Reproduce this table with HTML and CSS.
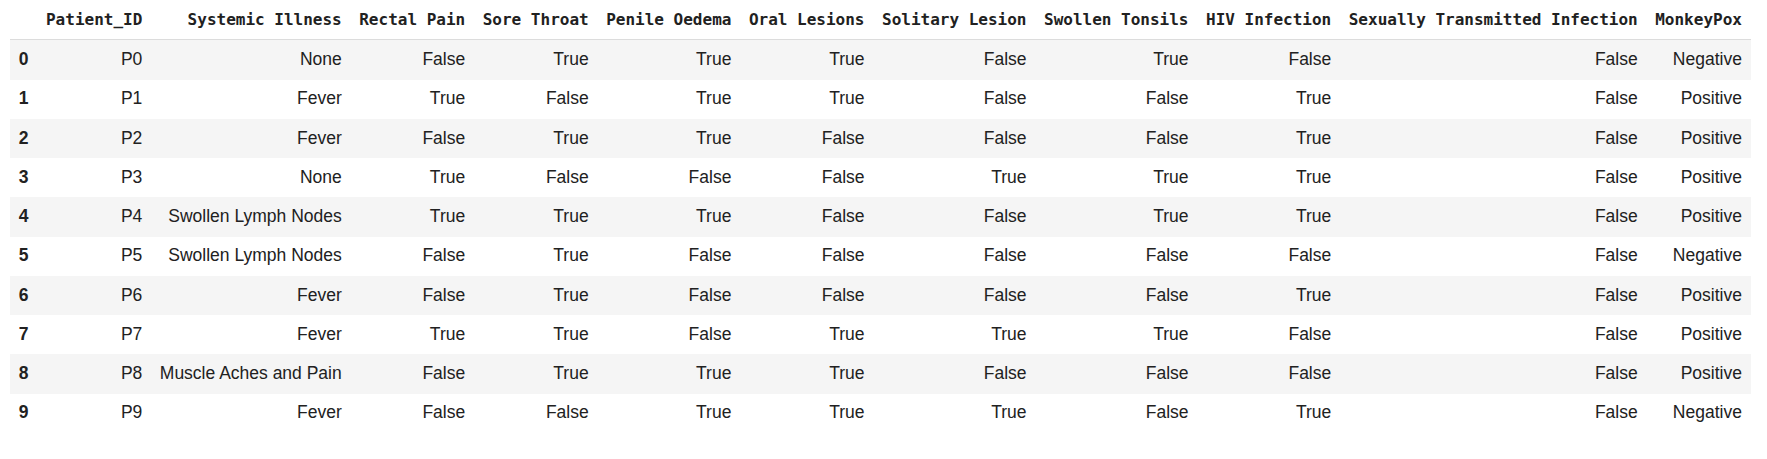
FILE: index.html
```html
<!DOCTYPE html>
<html>
<head>
<meta charset="utf-8">
<link rel="stylesheet" href="styles.css">
</head>
<body>
<table class="df">
  <thead>
    <tr>
      <th class="idx-head"></th>
      <th>Patient_ID</th>
      <th>Systemic Illness</th>
      <th>Rectal Pain</th>
      <th>Sore Throat</th>
      <th>Penile Oedema</th>
      <th>Oral Lesions</th>
      <th>Solitary Lesion</th>
      <th>Swollen Tonsils</th>
      <th>HIV Infection</th>
      <th>Sexually Transmitted Infection</th>
      <th>MonkeyPox</th>
    </tr>
  </thead>
  <tbody>
    <tr><th>0</th><td>P0</td><td>None</td><td>False</td><td>True</td><td>True</td><td>True</td><td>False</td><td>True</td><td>False</td><td>False</td><td>Negative</td></tr>
    <tr><th>1</th><td>P1</td><td>Fever</td><td>True</td><td>False</td><td>True</td><td>True</td><td>False</td><td>False</td><td>True</td><td>False</td><td>Positive</td></tr>
    <tr><th>2</th><td>P2</td><td>Fever</td><td>False</td><td>True</td><td>True</td><td>False</td><td>False</td><td>False</td><td>True</td><td>False</td><td>Positive</td></tr>
    <tr><th>3</th><td>P3</td><td>None</td><td>True</td><td>False</td><td>False</td><td>False</td><td>True</td><td>True</td><td>True</td><td>False</td><td>Positive</td></tr>
    <tr><th>4</th><td>P4</td><td>Swollen Lymph Nodes</td><td>True</td><td>True</td><td>True</td><td>False</td><td>False</td><td>True</td><td>True</td><td>False</td><td>Positive</td></tr>
    <tr><th>5</th><td>P5</td><td>Swollen Lymph Nodes</td><td>False</td><td>True</td><td>False</td><td>False</td><td>False</td><td>False</td><td>False</td><td>False</td><td>Negative</td></tr>
    <tr><th>6</th><td>P6</td><td>Fever</td><td>False</td><td>True</td><td>False</td><td>False</td><td>False</td><td>False</td><td>True</td><td>False</td><td>Positive</td></tr>
    <tr><th>7</th><td>P7</td><td>Fever</td><td>True</td><td>True</td><td>False</td><td>True</td><td>True</td><td>True</td><td>False</td><td>False</td><td>Positive</td></tr>
    <tr><th>8</th><td>P8</td><td>Muscle Aches and Pain</td><td>False</td><td>True</td><td>True</td><td>True</td><td>False</td><td>False</td><td>False</td><td>False</td><td>Positive</td></tr>
    <tr><th>9</th><td>P9</td><td>Fever</td><td>False</td><td>False</td><td>True</td><td>True</td><td>True</td><td>False</td><td>True</td><td>False</td><td>Negative</td></tr>
  </tbody>
</table>
</body>
</html>
```

FILE: styles.css
```css
html, body {
  background: #ffffff;
}
body {
  margin: 0 10px;
  font-family: "Liberation Sans", Arial, sans-serif;
  font-size: 17.5px;
  color: #212121;
}
.df {
  border-collapse: collapse;
  border-spacing: 0;
}
.df th,
.df td {
  padding: 8.75px;
  line-height: 21.75px;
  text-align: right;
  white-space: nowrap;
  vertical-align: middle;
}
.df thead th {
  font-family: "DejaVu Sans Mono", "Liberation Mono", monospace;
  font-size: 16px;
  font-weight: bold;
  color: #212121;
  border-bottom: 1px solid #dcdcdc;
}
.df tbody th {
  font-weight: bold;
  text-align: left;
}
.df tbody tr:nth-child(odd) {
  background: #f5f5f5;
}
```
